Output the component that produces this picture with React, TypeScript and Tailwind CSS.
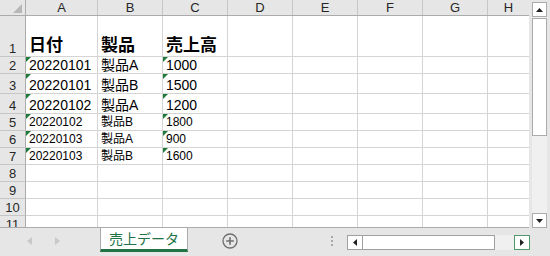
import React from "react"

const font = { fontFamily: '"Liberation Sans", "Noto Sans CJK JP", sans-serif' }

const colWidths = [72, 65, 65, 65, 65, 65, 65, 41]
const colNames = ["A", "B", "C", "D", "E", "F", "G", "H"]
const rowHeights = [41, 17, 20, 20, 17, 17, 17, 17, 17, 17, 17]

type Cell = { text: string; flag?: boolean }

const data: { size: string; cells: Cell[] }[] = [
    { size: "text-[17px] font-bold", cells: [{ text: "日付" }, { text: "製品" }, { text: "売上高" }] },
    { size: "text-[14px]", cells: [{ text: "20220101", flag: true }, { text: "製品A" }, { text: "1000", flag: true }] },
    { size: "text-[14px]", cells: [{ text: "20220101", flag: true }, { text: "製品B" }, { text: "1500", flag: true }] },
    { size: "text-[14px]", cells: [{ text: "20220102", flag: true }, { text: "製品A" }, { text: "1200", flag: true }] },
    { size: "text-[12px]", cells: [{ text: "20220102", flag: true }, { text: "製品B" }, { text: "1800", flag: true }] },
    { size: "text-[12px]", cells: [{ text: "20220103", flag: true }, { text: "製品A" }, { text: "900", flag: true }] },
    { size: "text-[12px]", cells: [{ text: "20220103", flag: true }, { text: "製品B" }, { text: "1600", flag: true }] },
]

function Flag() {
    return (
        <svg className="absolute left-0 top-0" width="6" height="6" viewBox="0 0 6 6">
            <polygon points="0,0 5,0 0,5" fill="#1d7a3a" />
        </svg>
    )
}

function Grid() {
    return (
        <div className="w-[529px] h-[228px] overflow-hidden bg-white border-b border-[#ababab]">
            {/* column headers */}
            <div className="flex h-[16px] bg-[#e6e6e6] border-b border-[#ababab]">
                <div className="w-[26px] shrink-0 relative border-r border-[#ababab]">
                    <svg className="absolute left-[13px] top-[4px]" width="10" height="10" viewBox="0 0 10 10">
                        <polygon points="9,0 9,9 0,9" fill="#b7b7b7" />
                    </svg>
                </div>
                {colNames.map((c, i) => (
                    <div
                        key={c}
                        style={{ width: colWidths[i] }}
                        className={
                            "shrink-0 flex items-center justify-center text-[13px] leading-none text-[#262626] " +
                            (i < 7 ? "border-r border-[#c6c6c6]" : "")
                        }
                    >
                        {c}
                    </div>
                ))}
            </div>
            {rowHeights.map((h, r) => {
                const row = data[r]
                const last = r === rowHeights.length - 1
                return (
                    <div key={r} className="flex" style={{ height: h }}>
                        <div
                            className={
                                "w-[26px] shrink-0 bg-[#e6e6e6] border-r border-[#ababab] border-b border-b-[#c6c6c6] flex justify-center text-[13px] leading-[15px] text-[#262626] " +
                                (last ? "items-start pt-[1px]" : "items-end")
                            }
                        >
                            {r + 1}
                        </div>
                        {colWidths.map((w, c) => {
                            const cell = row?.cells[c]
                            return (
                                <div
                                    key={c}
                                    style={{ width: w }}
                                    className={
                                        "shrink-0 relative border-b border-[#d4d4d4] flex items-end pl-[3px] text-black whitespace-nowrap " +
                                        (c < 7 ? "border-r " : "") +
                                        (row ? row.size : "")
                                    }
                                >
                                    {cell?.flag && <Flag />}
                                    {cell && <span className="leading-[1.15]">{cell.text}</span>}
                                </div>
                            )
                        })}
                    </div>
                )
            })}
        </div>
    )
}

function VScroll() {
    return (
        <div className="w-[21px] h-[228px] px-[3px] pt-[2px] bg-[#e6e6e6]">
            <div className="h-full bg-[#f0f0f0] flex flex-col">
                <div className="h-[15px] border border-[#ababab] bg-white flex items-center justify-center">
                    <svg width="7" height="4" viewBox="0 0 7 4">
                        <polygon points="3.5,0 7,4 0,4" fill="#222" />
                    </svg>
                </div>
                <div className="mt-[1px] h-[118px] border border-[#ababab] bg-white" />
                <div className="flex-1" />
                <div className="h-[15px] border border-[#ababab] bg-white flex items-center justify-center">
                    <svg width="7" height="4" viewBox="0 0 7 4">
                        <polygon points="0,0 7,0 3.5,4" fill="#222" />
                    </svg>
                </div>
            </div>
        </div>
    )
}

function BottomBar() {
    return (
        <div className="h-[28px] bg-[#e6e6e6] flex items-start">
            <div className="w-[100px] h-[25px] flex items-center">
                <svg className="ml-[27px]" width="5" height="8" viewBox="0 0 5 8">
                    <polygon points="5,0 5,8 0,4" fill="#c8c8c8" />
                </svg>
                <svg className="ml-[23px]" width="5" height="8" viewBox="0 0 5 8">
                    <polygon points="0,0 0,8 5,4" fill="#c8c8c8" />
                </svg>
            </div>
            <div className="w-[88px] h-[24px] bg-white border-x border-[#ababab] border-b-[3px] border-b-[#217346] flex items-center justify-center text-[14px] text-[#217346] pt-[1px]">
                売上データ
            </div>
            <div className="h-[25px] flex items-center ml-[34px]">
                <svg width="16" height="16" viewBox="0 0 16 16">
                    <circle cx="8" cy="8" r="7" fill="none" stroke="#6e6e6e" strokeWidth="1.3" />
                    <path d="M8 4.2V11.8M4.2 8H11.8" stroke="#6e6e6e" strokeWidth="1.6" />
                </svg>
            </div>
            <div className="h-[25px] ml-[93px] flex flex-col items-center justify-center gap-[2px]">
                <div className="w-[2px] h-[2px] bg-[#a8a8a8]" />
                <div className="w-[2px] h-[2px] bg-[#a8a8a8]" />
                <div className="w-[2px] h-[2px] bg-[#a8a8a8]" />
            </div>
            <div className="ml-[14px] mt-[7px] flex h-[15px] w-[183px] bg-[#f0f0f0]">
                <div className="w-[16px] border border-[#a0a0a0] bg-white flex items-center justify-center">
                    <svg width="4" height="7" viewBox="0 0 4 7">
                        <polygon points="4,0 4,7 0,3.5" fill="#222" />
                    </svg>
                </div>
                <div className="w-[132px] border border-l-0 border-[#a0a0a0] bg-white" />
                <div className="flex-1" />
                <div className="w-[16px] border border-[#4f9a6a] bg-white flex items-center justify-center">
                    <svg width="4" height="7" viewBox="0 0 4 7">
                        <polygon points="0,0 0,7 4,3.5" fill="#222" />
                    </svg>
                </div>
            </div>
        </div>
    )
}

export default function App() {
    return (
        <div className="w-[550px] h-[256px] overflow-hidden bg-[#e6e6e6]" style={font}>
            <div className="flex">
                <Grid />
                <VScroll />
            </div>
            <BottomBar />
        </div>
    )
}
